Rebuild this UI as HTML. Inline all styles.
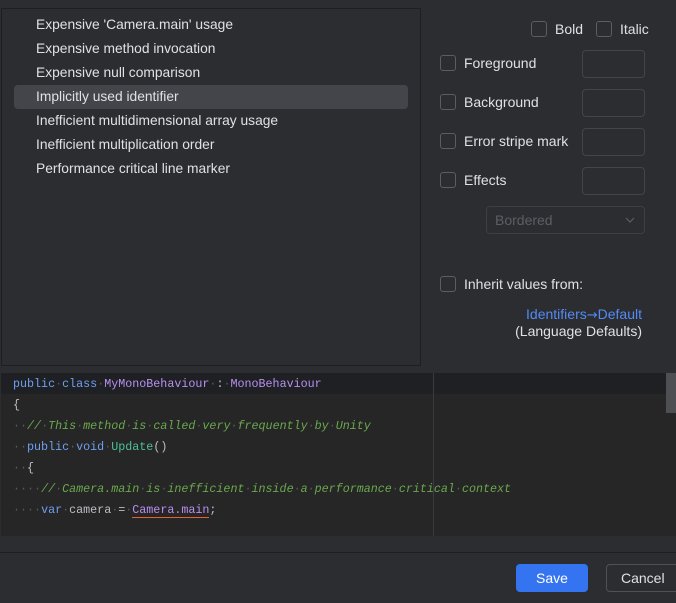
<!DOCTYPE html>
<html><head><meta charset="utf-8"><style>
*{margin:0;padding:0;box-sizing:border-box}
body{width:676px;height:603px;background:#2b2d30;font-family:"Liberation Sans",sans-serif;color:#dfe1e5;position:relative;overflow:hidden;font-size:14px}
.abs{position:absolute}
.list{left:1px;top:8px;width:420px;height:358px;border:1px solid #1e1f22;background:#2b2d30}
.item{position:absolute;left:36px;font-size:13.8px;color:#dfe1e5;white-space:nowrap}
.sel{left:14px;top:85px;width:394px;height:24px;background:#43454a;border-radius:4px}
.cb{position:absolute;width:16px;height:16px;border:1px solid #5a5d63;border-radius:3px;background:#2b2d30}
.lbl{position:absolute;font-size:14px;white-space:nowrap}
.sw{position:absolute;left:582px;width:63px;height:28px;border:1px solid #43454a;border-radius:4px}
.code{left:1px;top:373px;width:675px;height:163px;background:#262626;font-family:"Liberation Mono",monospace;font-size:11.7px}
.ln{position:absolute;left:12px;white-space:pre;height:21px;line-height:21px;top:1px}
.k{color:#6f9fef}.t{color:#b98ff0}.c{color:#6aa84f;font-style:italic}.d{color:#56595f}.f{color:#4ebf9d}.p{color:#bcbec4}
</style></head><body>
<div class="abs list"></div>
<div class="abs sel"></div>
<div class="item" style="top:17px">Expensive 'Camera.main' usage</div>
<div class="item" style="top:41px">Expensive method invocation</div>
<div class="item" style="top:65px">Expensive null comparison</div>
<div class="item" style="top:89px">Implicitly used identifier</div>
<div class="item" style="top:113px">Inefficient multidimensional array usage</div>
<div class="item" style="top:137px">Inefficient multiplication order</div>
<div class="item" style="top:161px">Performance critical line marker</div>

<div class="cb" style="left:531px;top:21px"></div><div class="lbl" style="left:555px;top:21px">Bold</div>
<div class="cb" style="left:596px;top:21px"></div><div class="lbl" style="left:620px;top:21px">Italic</div>
<div class="cb" style="left:440px;top:55px"></div><div class="lbl" style="left:464px;top:55px">Foreground</div><div class="sw" style="top:50px"></div>
<div class="cb" style="left:440px;top:94px"></div><div class="lbl" style="left:464px;top:94px">Background</div><div class="sw" style="top:89px"></div>
<div class="cb" style="left:440px;top:133px"></div><div class="lbl" style="left:464px;top:133px">Error stripe mark</div><div class="sw" style="top:128px"></div>
<div class="cb" style="left:440px;top:172px"></div><div class="lbl" style="left:464px;top:172px">Effects</div><div class="sw" style="top:167px"></div>
<div class="abs" style="left:486px;top:206px;width:159px;height:28px;border:1px solid #3c3f44;border-radius:4px"></div>
<div class="lbl" style="left:495px;top:212px;color:#5b5e63">Bordered</div>
<svg class="abs" style="left:625px;top:216px" width="10" height="8"><path d="M1 2 L5 6 L9 2" stroke="#5b5e63" fill="none" stroke-width="1.2"/></svg>
<div class="cb" style="left:440px;top:276px"></div><div class="lbl" style="left:464px;top:276px">Inherit values from:</div>
<div class="lbl" style="right:34px;top:306px;color:#548af7">Identifiers<span style="font-family:'DejaVu Sans',sans-serif;font-size:13px">→</span>Default</div>
<div class="lbl" style="right:34px;top:323px">(Language Defaults)</div>

<div class="abs code">
<div class="abs" style="left:0;top:0;width:665px;height:21px;background:#1f2023"></div>
<div class="abs" style="left:432px;top:0;width:1px;height:163px;background:#393b40"></div>
<div class="abs" style="left:665px;top:0;width:10px;height:40px;background:#4d4f53"></div>
<div class="ln" style="top:1px"><span class="k">public</span><span class="d">·</span><span class="k">class</span><span class="d">·</span><span class="t">MyMonoBehaviour</span><span class="d">·</span><span class="p">:</span><span class="d">·</span><span class="t">MonoBehaviour</span></div>
<div class="ln p" style="top:22px">{</div>
<div class="ln" style="top:43px"><span class="d">··</span><span class="c">//<span class="d">·</span>This<span class="d">·</span>method<span class="d">·</span>is<span class="d">·</span>called<span class="d">·</span>very<span class="d">·</span>frequently<span class="d">·</span>by<span class="d">·</span>Unity</span></div>
<div class="ln" style="top:64px"><span class="d">··</span><span class="k">public</span><span class="d">·</span><span class="k">void</span><span class="d">·</span><span class="f">Update</span><span class="p">()</span></div>
<div class="ln" style="top:85px"><span class="d">··</span><span class="p">{</span></div>
<div class="ln" style="top:106px"><span class="d">····</span><span class="c">//<span class="d">·</span>Camera.main<span class="d">·</span>is<span class="d">·</span>inefficient<span class="d">·</span>inside<span class="d">·</span>a<span class="d">·</span>performance<span class="d">·</span>critical<span class="d">·</span>context</span></div>
<div class="ln" style="top:127px"><span class="d">····</span><span class="k">var</span><span class="d">·</span><span class="p">camera</span><span class="d">·</span><span class="p">=</span><span class="d">·</span><span class="t" style="border-bottom:1px solid #e8632b">Camera.main</span><span class="p">;</span></div>
</div>
<div class="abs" style="left:0;top:552px;width:676px;height:1px;background:#1e1f22"></div>
<div class="abs" style="left:516px;top:564px;width:72px;height:28px;background:#3574f0;border-radius:4px;color:#fff;text-align:center;line-height:28px;font-size:14px">Save</div>
<div class="abs" style="left:606px;top:564px;width:80px;height:28px;border:1px solid #4e5157;border-radius:4px;line-height:26px;padding-left:14px;font-size:14px">Cancel</div>
</body></html>
